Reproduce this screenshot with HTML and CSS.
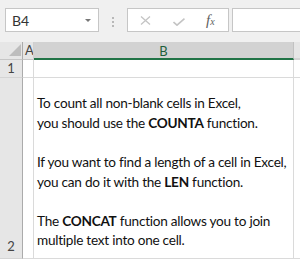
FILE: index.html
```html
<!DOCTYPE html>
<html lang="en">
<head>
  <meta charset="UTF-8">
  <meta name="viewport" content="width=device-width, initial-scale=1.0">
  <title>Excel - Text in a cell</title>
  <link rel="stylesheet" href="styles.css">
</head>
<body>
  <div class="topbar">
    <div class="namebox">
      <span class="ref">B4</span>
      <span class="caret"></span>
    </div>
    <div class="grip">
      <span></span><span></span><span></span>
    </div>
    <div class="fxbox">
      <svg class="icon-x" width="11" height="9" viewBox="0 0 11 9">
        <path d="M1 0.5 L10 8.5 M10 0.5 L1 8.5" stroke="#c4c4c4" stroke-width="1.3" fill="none"/>
      </svg>
      <svg class="icon-ok" width="12" height="8" viewBox="0 0 12 8">
        <path d="M0.5 4 L4 7.2 L11.5 0.6" stroke="#c4c4c4" stroke-width="1.6" fill="none"/>
      </svg>
      <span class="fx"><i>f</i><span class="x">x</span></span>
    </div>
    <div class="formula"></div>
  </div>

  <div class="sheet">
    <div class="corner"><span class="tri"></span></div>
    <div class="colhead">A</div>
    <div class="colhead active">B</div>
    <div class="colhead rest"></div>

    <div class="rowhead">1</div>
    <div class="cell"></div>
    <div class="cell"></div>
    <div class="cell rest"></div>

    <div class="rowhead bottom">2</div>
    <div class="cell"></div>
    <div class="cell text">
      <p>To count all non-blank cells in Excel,</p>
      <p>you should use the <b>COUNTA</b> function.</p>
      <p>&nbsp;</p>
      <p>If you want to find a length of a cell in Excel,</p>
      <p>you can do it with the <b>LEN</b> function.</p>
      <p>&nbsp;</p>
      <p>The <b>CONCAT</b> function allows you to join</p>
      <p>multiple text into one cell.</p>
    </div>
    <div class="cell rest"></div>
  </div>
</body>
</html>
```

FILE: styles.css
```css
body {
  margin: 0;
  width: 300px;
  height: 261px;
  overflow: hidden;
  background-color: #ffffff;
  font-family: "Lato", "Liberation Sans", sans-serif;
}

/* formula bar */
.topbar {
  display: flex;
  align-items: flex-start;
  height: 42px;
  padding-top: 8px;
  box-sizing: border-box;
  background-color: #f0f0f0;
}
.namebox {
  display: flex;
  align-items: center;
  justify-content: space-between;
  margin-left: 5px;
  width: 94px;
  height: 24px;
  padding: 0 7px 0 6px;
  box-sizing: border-box;
  background: white;
  border: 1px solid #c6c6c6;
}
.ref {
  font-size: 14px;
  color: #333;
}
.caret {
  width: 0;
  height: 0;
  border-left: 3px solid transparent;
  border-right: 3px solid transparent;
  border-top: 3px solid #777;
}
.grip {
  display: flex;
  flex-direction: column;
  align-items: center;
  gap: 2px;
  width: 28px;
  padding-top: 9px;
}
.grip span {
  width: 2px;
  height: 2px;
  background-color: #b8b8b8;
}
.fxbox {
  display: flex;
  align-items: center;
  width: 102px;
  height: 24px;
  box-sizing: border-box;
  background: white;
  border: 1px solid #c6c6c6;
}
.icon-x {
  margin-left: 12px;
}
.icon-ok {
  margin-left: 22px;
  margin-top: 3px;
}
.fx {
  margin-left: 21px;
  font-family: "Liberation Serif", serif;
  color: #606060;
  font-size: 15px;
}
.fx .x {
  font-size: 10px;
  font-style: italic;
}
.formula {
  flex: 1;
  height: 24px;
  margin-left: 3px;
  margin-right: -2px;
  box-sizing: border-box;
  background: white;
  border: 1px solid #c6c6c6;
}

/* grid */
.sheet {
  display: grid;
  grid-template-columns: 23px 11px 260px 1fr;
  grid-template-rows: 18px 18px 181px;
}
.corner {
  position: relative;
  background-color: #e6e6e6;
  border-right: 1px solid #ababab;
  border-bottom: 1px solid #c6c6c6;
}
.corner .tri {
  position: absolute;
  right: 1px;
  bottom: 3px;
  width: 0;
  height: 0;
  border-left: 12px solid transparent;
  border-bottom: 12px solid #bdbdbd;
}
.colhead {
  overflow: hidden;
  background-color: #e6e6e6;
  border-right: 1px solid #d0d0d0;
  border-bottom: 1px solid #c6c6c6;
  font-size: 13px;
  line-height: 17px;
  color: #444;
  padding-left: 2px;
}
.colhead.active {
  background-color: #d2d2d2;
  border-right: 1px solid #c2c2c2;
  border-bottom: 2px solid #217346;
  color: #1e5f3c;
  text-align: center;
  line-height: 18px;
  padding-left: 0;
}
.colhead.rest {
  border-right: none;
  border-bottom: 2px solid #d4d4d4;
}
.rowhead {
  background-color: #e6e6e6;
  border-right: 1px solid #ababab;
  border-bottom: 1px solid #d4d4d4;
  font-size: 13px;
  color: #444;
  text-align: center;
  line-height: 17px;
}
.rowhead.bottom {
  display: flex;
  align-items: flex-end;
  justify-content: center;
  padding-bottom: 3px;
  box-sizing: border-box;
}
.cell {
  border-right: 1px solid #dadada;
  border-bottom: 1px solid #dadada;
}
.cell.rest {
  border-right: none;
}
.text {
  display: flex;
  flex-direction: column;
  justify-content: flex-end;
  padding: 0 0 7px 3px;
  font-size: 13.6px;
  letter-spacing: -0.25px;
  line-height: 19.6px;
  color: #111;
  white-space: nowrap;
  overflow: hidden;
}
.text p {
  margin: 0;
}
.text b {
  font-weight: 700;
}
```
